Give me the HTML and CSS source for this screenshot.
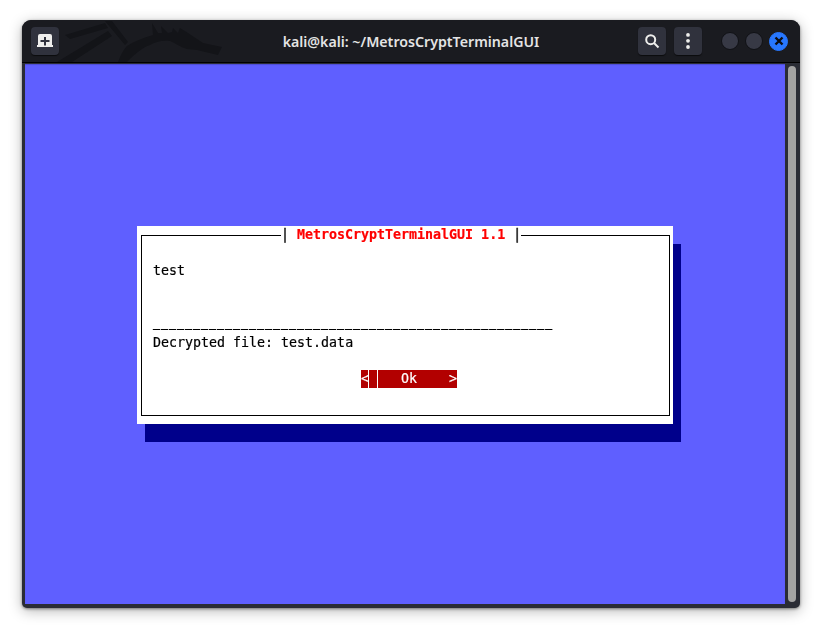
FILE: index.html
```html
<!DOCTYPE html>
<html lang="en">
<head>
<meta charset="utf-8">
<title>kali@kali: ~/MetrosCryptTerminalGUI</title>
<link rel="stylesheet" href="styles.css">
</head>
<body>
<div class="window">
  <header class="titlebar">
    <svg class="dragon" width="240" height="42" viewBox="0 0 240 42">
      <path class="dragon-fill" d="M43 15L83 3l3 5L48 19zM35 42L86 11l4 5L50 42zM83 1h7l16 21-3 3z"/>
      <path class="dragon-fill" d="M96 42C99 34 102 29 105 26 113 21 121 18 131 15L130 3 136 13 140 13 139 6 146 13 150 12 151 8 156 13 158 8 166 13 181 23 200 27 196 35 175 30 165 29C158 27 153 23 148 21 140 20 133 22 128 25 121 27 114 33 105 42z"/>
    </svg>
    <button class="hb"><svg width="16" height="16" viewBox="0 0 16 16"><path class="ic" d="M0 12h16v2H0zM1 12V3a2 2 0 0 1 2-2h10a2 2 0 0 1 2 2v9zM7 4v3H3.500v2H7v3.500h2V9h3.500V7H9V4z" fill-rule="evenodd"/></svg></button>
    <div class="title">kali@kali: ~/MetrosCryptTerminalGUI</div>
    <button class="hb"><svg width="16" height="16" viewBox="0 0 16 16"><circle class="ics" cx="6.700" cy="6.700" r="4.500"/><path class="ics" d="M10 10l4.500 4.500"/></svg></button>
    <button class="hb"><svg width="16" height="16" viewBox="0 0 16 16"><circle class="ic" cx="8" cy="1.900" r="1.900"/><circle class="ic" cx="8" cy="7.800" r="1.900"/><circle class="ic" cx="8" cy="14" r="1.900"/></svg></button>
    <div class="controls">
      <span class="dot"></span>
      <span class="dot"></span>
      <span class="dot close"><svg width="10" height="10" viewBox="0 0 10 10"><path class="x" d="M1.500 1.500l7 7M8.500 1.500l-7 7"/></svg></span>
    </div>
  </header>
  <div class="content">
    <main class="terminal">
      <section class="dialog">
        <div class="box">
          <div class="legend">
            <span class="rule rule-start"></span>
            <span class="bar">|</span>
            <span class="name">MetrosCryptTerminalGUI 1.1</span>
            <span class="bar bar-end">|</span>
            <span class="rule"></span>
          </div>
          <pre class="msg">test


<span class="under">__________________________________________________</span>
Decrypted file: test.data</pre>
          <div class="actions">
            <div class="ok">
              <span class="lt">&lt;</span>
              <span class="sep"></span>
              <span class="label">Ok</span>
              <span class="gt">&gt;</span>
            </div>
          </div>
        </div>
      </section>
    </main>
    <div class="scrollzone"><div class="thumb"></div></div>
  </div>
</div>
</body>
</html>
```
FILE: styles.css
```css
* { box-sizing: border-box; }
html, body { margin: 0; height: 100%; background: #fff; overflow: hidden; }
body { padding: 20px 22px 24px; }
.window {
  width: 778px;
  height: 588px;
  display: flex;
  flex-direction: column;
  border-radius: 9px 9px 5px 5px;
  background: #2a2c35;
  box-shadow: 0 1px 3px rgba(0,0,0,.45), 0 3px 14px rgba(0,0,0,.28);
  overflow: hidden;
}
.titlebar {
  position: relative;
  height: 43px;
  flex: none;
  display: flex;
  align-items: center;
  gap: 8px;
  padding: 0 12px 0 9px;
  background: #1a1b20;
  border-bottom: 1px solid #000;
}
.dragon { position: absolute; left: 0; top: 0; }
.dragon-fill { fill: #131418; }
.hb {
  position: relative;
  width: 28px;
  height: 28px;
  padding: 0;
  flex: none;
  display: flex;
  align-items: center;
  justify-content: center;
  border: 0;
  border-radius: 4px;
  background: #30323d;
  box-shadow: 0 1px 1px rgba(0,0,0,.6);
}
.ic { fill: #eeeeec; }
.ics { fill: none; stroke: #eeeeec; stroke-width: 2; }
.title {
  position: relative;
  flex: 1;
  text-align: center;
  font: 600 14.2px "Noto Sans", sans-serif;
  color: #e4e4e4;
  padding-left: 125px;
}
.controls { position: relative; display: flex; gap: 6px; margin-left: 11px; }
.dot {
  width: 18px;
  height: 18px;
  display: flex;
  align-items: center;
  justify-content: center;
  border-radius: 50%;
  background: #373945;
  border: 1px solid #101115;
}
.close { width: 19px; height: 19px; background: #2777ff; border-color: #2777ff; }
.x { stroke: #0c0c10; stroke-width: 2.4; fill: none; }
.content { flex: 1; display: flex; padding: 1px 0 4px 3px; min-height: 0; }
.terminal {
  width: 760px;
  background: #5f5fff;
  padding-top: 162px;
  display: flex;
  justify-content: center;
  align-items: flex-start;
  box-shadow: inset 0 1px 1px rgba(0,0,0,.18);
}
.dialog {
  width: 536px;
  height: 198px;
  padding: 9px 3px 9px 4px;
  background: #fff;
  box-shadow: 8px 18px 0 #00008b;
  font: 13.3px/18px "DejaVu Sans Mono", monospace;
  color: #000;
  -webkit-text-stroke: .2px currentColor;
}
.box {
  height: 181px;
  border: 1px solid #000;
  border-top: 0;
  padding: 0 11px;
  will-change: transform;
}
.legend {
  display: flex;
  align-items: center;
  height: 0;
  margin: 0 -11px;
}
.rule { flex: 1; height: 1px; background: #000; }
.rule-start { flex: 0 0 139px; }
.bar { width: 16px; color: #222; -webkit-text-stroke: .5px currentColor; }
.bar-end { text-align: right; }
.name { font-weight: 700; color: #f00; white-space: pre; }
.msg { margin: 0; padding-top: 27px; font: inherit; }
.under {
  position: relative;
  top: -2px;
  font-size: 11.5px;
  letter-spacing: 1.08px;
  -webkit-text-stroke: .35px #000;
}
.actions { display: flex; padding: 18px 0 0 208px; }
.ok {
  width: 96px;
  height: 18px;
  display: flex;
  background: #b20000;
  color: #fff;
}
.lt { width: 7px; }
.sep { width: 10px; border: solid #fff; border-width: 0 1px; }
.label { width: 71px; padding-left: 23px; }
.gt { width: 8px; }
.scrollzone { flex: 1; padding: 2px 4px 2px 3px; }
.thumb { height: 100%; background: #a3a3a3; border-radius: 4px; }
```
